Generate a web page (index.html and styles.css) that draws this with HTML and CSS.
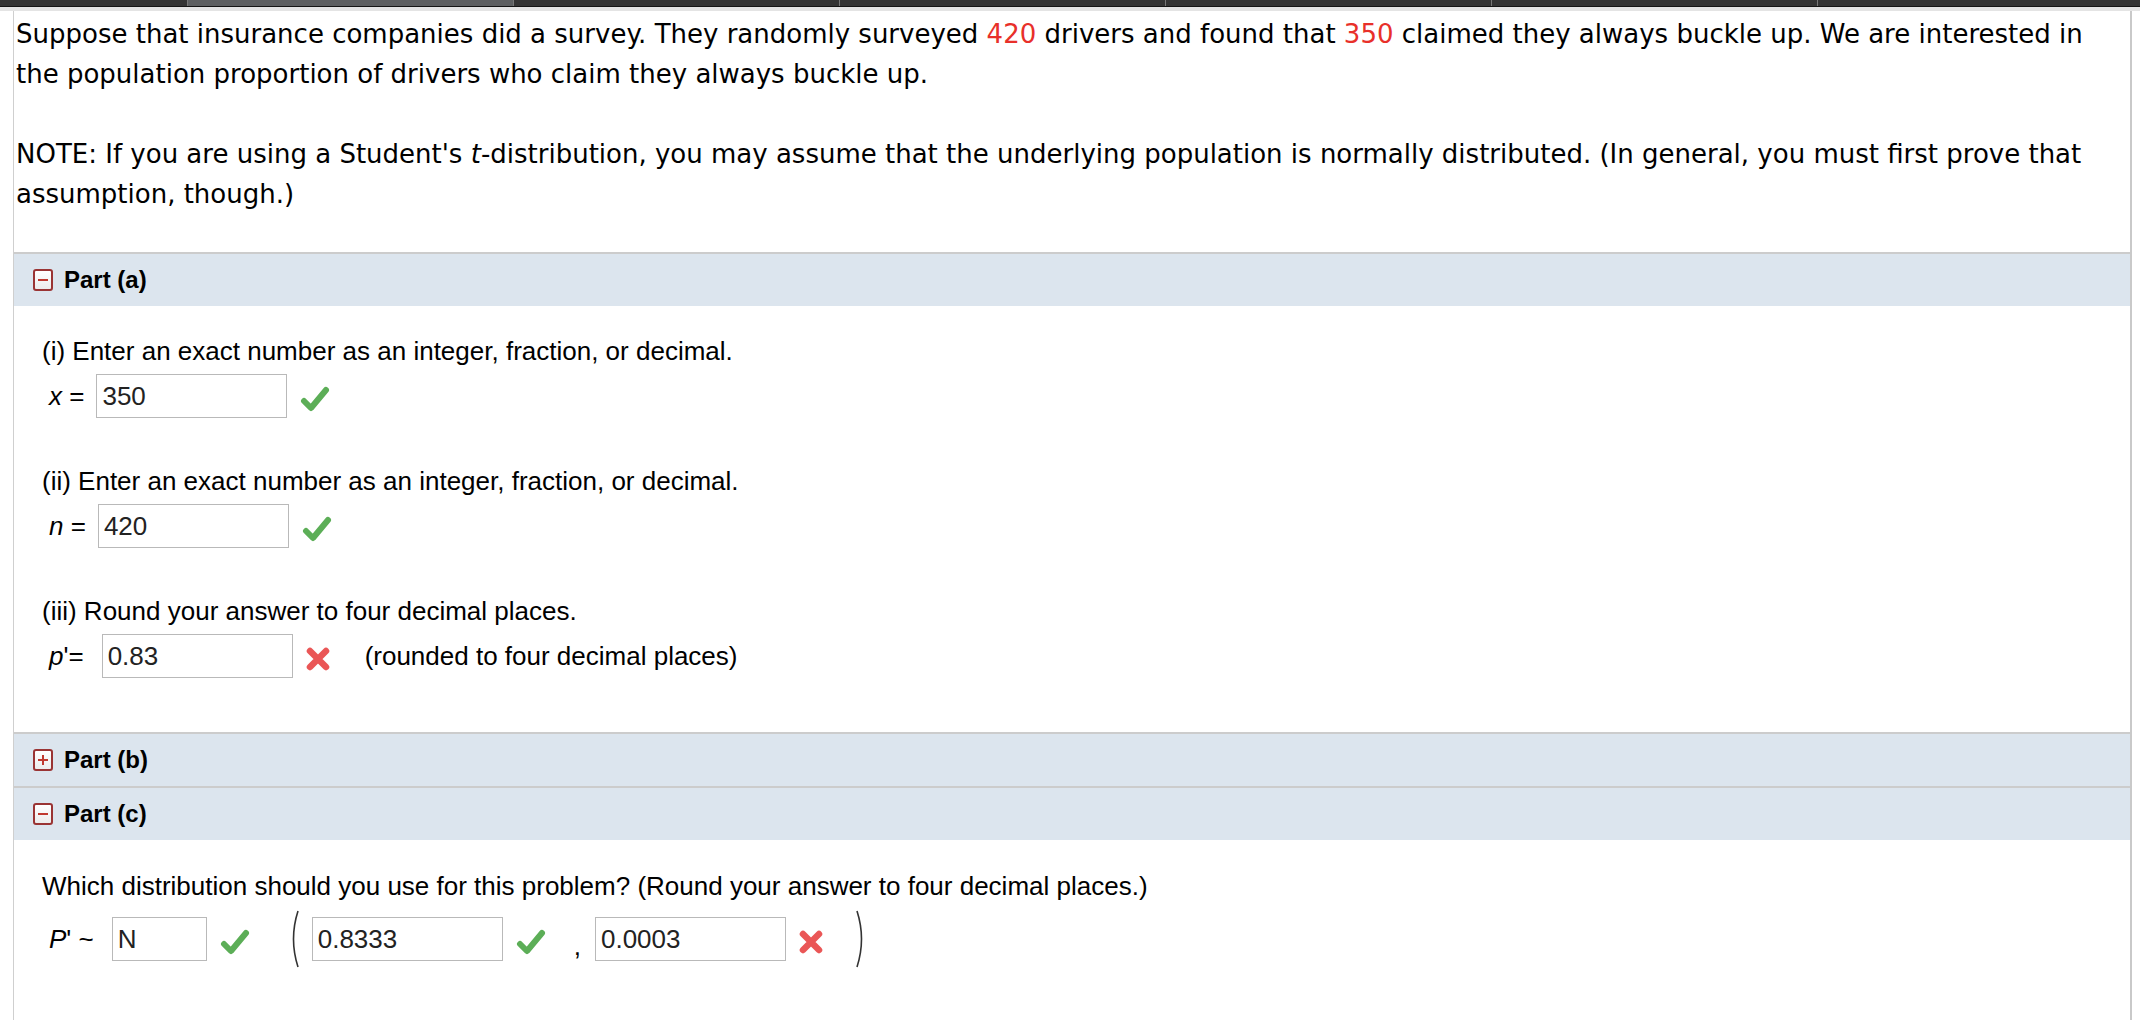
FILE: index.html
```html
<!DOCTYPE html>
<html lang="en">
<head>
<meta charset="utf-8">
<title>Survey question</title>
<link rel="stylesheet" href="styles.css">
</head>
<body>
<div class="topbar">
  <div class="tab tab-first"></div>
  <div class="tab tab-active"></div>
  <div class="tab"></div>
  <div class="tab"></div>
  <div class="tab"></div>
  <div class="tab"></div>
  <div class="tab tab-last"></div>
</div>
<div class="topline"></div>
<div class="strip"></div>
<div class="page">
  <div class="intro">
    <p>Suppose that insurance companies did a survey. They randomly surveyed <span class="red">420</span> drivers and found that <span class="red">350</span> claimed they always buckle up. We are interested in the population proportion of drivers who claim they always buckle up.</p>
    <p>NOTE: If you are using a Student's <i>t</i>-distribution, you may assume that the underlying population is normally distributed. (In general, you must first prove that assumption, though.)</p>
  </div>

  <div class="part-head">
    <span class="toggle"><span class="bar"></span></span>
    <span class="part-title">Part (a)</span>
  </div>
  <div class="part-body part-a">
    <div class="q">
      <div class="q-text">(i) Enter an exact number as an integer, fraction, or decimal.</div>
      <div class="row">
        <span class="label"><i>x</i> =</span>
        <input class="answer" type="text" value="350" readonly>
        <svg class="icon-ok" viewBox="0 0 30 26" width="30" height="26"><path d="M4 15 L11 22 L26 4"/></svg>
      </div>
    </div>
    <div class="q">
      <div class="q-text">(ii) Enter an exact number as an integer, fraction, or decimal.</div>
      <div class="row">
        <span class="label"><i>n</i> =</span>
        <input class="answer" type="text" value="420" readonly>
        <svg class="icon-ok" viewBox="0 0 30 26" width="30" height="26"><path d="M4 15 L11 22 L26 4"/></svg>
      </div>
    </div>
    <div class="q">
      <div class="q-text">(iii) Round your answer to four decimal places.</div>
      <div class="row">
        <span class="label label-p"><i>p</i>'=</span>
        <input class="answer" type="text" value="0.83" readonly>
        <svg class="icon-bad" viewBox="0 0 26 26" width="26" height="26"><path d="M5 5 L21 21 M21 5 L5 21"/></svg>
        <span class="hint">(rounded to four decimal places)</span>
      </div>
    </div>
  </div>

  <div class="part-head">
    <span class="toggle"><span class="bar"></span><span class="bar bar-v"></span></span>
    <span class="part-title">Part (b)</span>
  </div>

  <div class="part-head">
    <span class="toggle"><span class="bar"></span></span>
    <span class="part-title">Part (c)</span>
  </div>
  <div class="part-body part-c">
    <div class="q-text">Which distribution should you use for this problem? (Round your answer to four decimal places.)</div>
    <div class="row row-c">
      <span class="label label-c"><i>P</i>' ~</span>
      <input class="answer answer-s" type="text" value="N" readonly>
      <svg class="icon-ok" viewBox="0 0 30 26" width="30" height="26"><path d="M4 15 L11 22 L26 4"/></svg>
      <svg class="paren" viewBox="0 0 12 58" width="12" height="58"><path d="M10 1 Q1 29 10 57"/></svg>
      <input class="answer" type="text" value="0.8333" readonly>
      <svg class="icon-ok" viewBox="0 0 30 26" width="30" height="26"><path d="M4 15 L11 22 L26 4"/></svg>
      <span class="comma">,</span>
      <input class="answer" type="text" value="0.0003" readonly>
      <svg class="icon-bad" viewBox="0 0 26 26" width="26" height="26"><path d="M5 5 L21 21 M21 5 L5 21"/></svg>
      <svg class="paren paren-close" viewBox="0 0 12 58" width="12" height="58"><path d="M2 1 Q11 29 2 57"/></svg>
    </div>
  </div>
</div>
</body>
</html>
```
FILE: styles.css
```css
html, body {
  margin: 0;
  padding: 0;
  background: #ffffff;
}

body {
  height: 1020px;
  overflow: hidden;
  color: #000;
}

.topbar {
  display: flex;
  height: 6px;
  background: #343434;
}

.tab {
  width: 326px;
  flex: none;
  border-right: 1px solid #777;
  box-sizing: border-box;
}

.tab-first {
  width: 188px;
}

.tab-active {
  background: #5d5f61;
}

.tab-last {
  flex: 1;
  border-right: none;
}

.topline {
  height: 1px;
  background: #151515;
}

.strip {
  height: 4px;
  background: #e4e4e4;
}

.page {
  margin: 0 8px 0 13px;
  border-left: 1px solid #cfcfcf;
  border-right: 2px solid #c9c9c9;
  min-height: 1100px;
}

.intro {
  font-family: "DejaVu Sans", Verdana, sans-serif;
  font-size: 26px;
  line-height: 40px;
  padding: 3px 0 38px 2px;
}

.intro p {
  margin: 0 0 40px 0;
}

.intro p:last-child {
  margin-bottom: 0;
}

.red {
  color: #e8302a;
}

.part-head {
  display: flex;
  align-items: center;
  height: 52px;
  border-top: 2px solid #cccccc;
  background: #dce5ee;
  padding-left: 19px;
  font-family: "Liberation Sans", Arial, sans-serif;
  font-weight: bold;
  font-size: 24px;
}

.toggle {
  position: relative;
  width: 20px;
  height: 22px;
  box-sizing: border-box;
  border: 2px solid #9a3434;
  border-radius: 3px;
  background: linear-gradient(#ffffff, #ececec);
  margin-right: 11px;
  flex: none;
}

.bar {
  position: absolute;
  left: 3px;
  top: 8px;
  width: 10px;
  height: 2px;
  background: #c0392f;
}

.bar-v {
  left: 7px;
  top: 4px;
  width: 2px;
  height: 10px;
}

.part-title {
  line-height: 28px;
}

.part-body {
  font-family: "Liberation Sans", Arial, sans-serif;
  font-size: 26px;
  padding-left: 28px;
}

.part-a {
  padding-top: 31px;
  padding-bottom: 54px;
}

.q + .q {
  margin-top: 49px;
}

.q-text {
  line-height: 28px;
}

.row {
  display: flex;
  align-items: center;
  margin-top: 9px;
  height: 44px;
  padding-left: 7px;
}

.label {
  white-space: pre;
  margin-right: 12px;
}

.label i {
  font-style: italic;
}

.label-p {
  margin-right: 18px;
}

.answer {
  width: 191px;
  height: 44px;
  box-sizing: border-box;
  border: 1px solid #b9b9b9;
  padding: 0 0 0 5px;
  margin: 0;
  font-family: "Liberation Sans", Arial, sans-serif;
  font-size: 26px;
  color: #222;
  background: #fff;
  outline: none;
}

.icon-ok {
  margin-left: 13px;
  margin-top: 6px;
  flex: none;
}

.icon-ok path {
  fill: none;
  stroke: #5cae57;
  stroke-width: 6;
  stroke-linecap: round;
  stroke-linejoin: round;
}

.icon-bad {
  margin-left: 12px;
  margin-top: 6px;
  flex: none;
}

.icon-bad path {
  fill: none;
  stroke: #ea5656;
  stroke-width: 6.5;
  stroke-linecap: round;
}

.hint {
  margin-left: 34px;
}

.part-c {
  padding-top: 32px;
  padding-bottom: 60px;
}

.row-c {
  height: 58px;
  margin-top: 10px;
}

.label-c {
  margin-right: 18px;
}

.answer-s {
  width: 95px;
}

.paren {
  flex: none;
  margin-left: 38px;
  margin-right: 12px;
}

.paren path {
  fill: none;
  stroke: #333;
  stroke-width: 1.6;
}

.paren-close {
  margin-left: 31px;
  margin-right: 0;
}

.comma {
  margin-left: 28px;
  margin-right: 14px;
  align-self: center;
  padding-top: 14px;
}
```
